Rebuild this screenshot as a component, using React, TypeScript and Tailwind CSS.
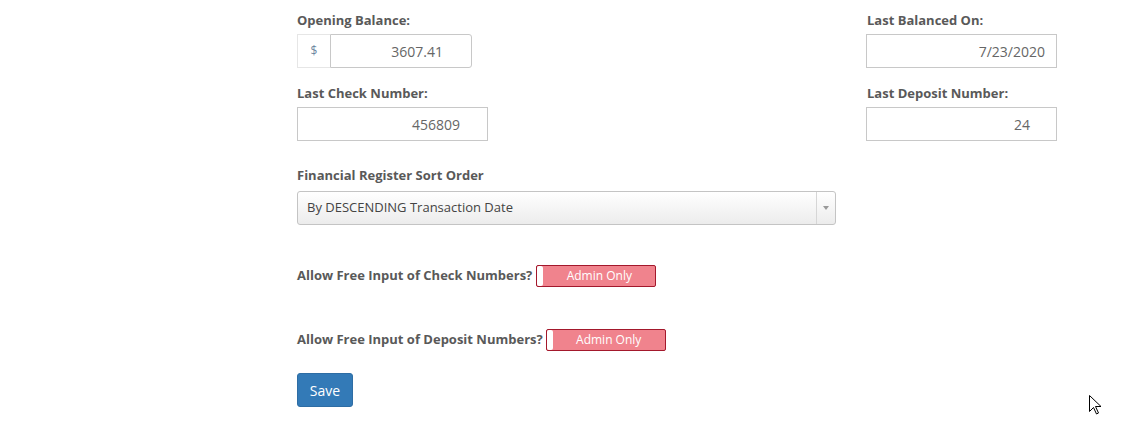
export default function App() {
  return (
    <div className="relative w-[1139px] h-[434px] bg-white font-['Open_Sans',sans-serif] text-[#666]">
      <div className="pl-[297px] pt-[11px] w-[1057px]">
        {/* top row */}
        <div className="flex justify-between">
          <div>
            <div className="text-[13px] leading-[18px] font-bold text-[#595959] mb-[5px]">Opening Balance:</div>
            <div className="flex h-[34px] w-[175px]">
              <span className="w-[33px] border border-[#e6e6e6] border-r-0 flex items-center justify-center text-[12px] text-[#6d86a0]">$</span>
              <div className="flex-1 border border-[#c8c8c8] rounded-r-[3px] flex items-center justify-end pr-[28px] text-[14px]">3607.41</div>
            </div>
          </div>
          <div>
            <div className="text-[13px] leading-[18px] font-bold text-[#595959] mb-[5px] pl-[1px]">Last Balanced On:</div>
            <div className="h-[34px] w-[191px] border border-[#c8c8c8] flex items-center justify-end pr-[11px] text-[14px]">7/23/2020</div>
          </div>
        </div>

        {/* second row */}
        <div className="flex justify-between mt-[16px]">
          <div>
            <div className="text-[13px] leading-[18px] font-bold text-[#595959] mb-[5px]">Last Check Number:</div>
            <div className="h-[34px] w-[191px] border border-[#c8c8c8] flex items-center justify-end pr-[27px] text-[14px]">456809</div>
          </div>
          <div>
            <div className="text-[13px] leading-[18px] font-bold text-[#595959] mb-[5px] pl-[1px]">Last Deposit Number:</div>
            <div className="h-[34px] w-[191px] border border-[#c8c8c8] flex items-center justify-end pr-[26px] text-[14px]">24</div>
          </div>
        </div>

        {/* sort order */}
        <div className="mt-[25px]">
          <div className="text-[13px] leading-[18px] font-bold text-[#595959] mb-[7px]">Financial Register Sort Order</div>
          <div className="h-[34px] w-[539px] border border-[#c4c4c4] rounded-[3px] flex bg-gradient-to-b from-white to-[#ececec]">
            <div className="flex-1 flex items-center pl-[9px] text-[13px] text-[#444]">By DESCENDING Transaction Date</div>
            <div className="w-[19px] border-l border-[#d6d6d6] flex items-center justify-center">
              <svg width="6" height="4" viewBox="0 0 6 4">
                <path d="M0 0H6L3 4Z" fill="#999" />
              </svg>
            </div>
          </div>
        </div>

        {/* toggles */}
        <div className="mt-[40px] flex items-center h-[22px]">
          <span className="text-[13px] font-bold text-[#595959] mr-[4px]">Allow Free Input of Check Numbers?</span>
          <div className="h-[22px] w-[120px] border border-[#a3182c] rounded-[2px] flex bg-[#f0838d]">
            <span className="w-[6px] bg-white rounded-[2px]"></span>
            <span className="flex-1 flex items-center justify-center text-[12px] text-white">Admin Only</span>
          </div>
        </div>
        <div className="mt-[42px] flex items-center h-[22px]">
          <span className="text-[13px] font-bold text-[#595959] mr-[3px]">Allow Free Input of Deposit Numbers?</span>
          <div className="h-[22px] w-[120px] border border-[#a3182c] rounded-[2px] flex bg-[#f0838d]">
            <span className="w-[6px] bg-white rounded-[2px]"></span>
            <span className="flex-1 flex items-center justify-center text-[12px] text-white">Admin Only</span>
          </div>
        </div>

        <button className="mt-[22px] h-[34px] w-[56px] bg-[#337ab7] border border-[#2e6da4] rounded-[3px] text-white text-[14px]">Save</button>
      </div>

      {/* mouse pointer */}
      <svg className="absolute left-[1089px] top-[395px]" width="13" height="20" viewBox="0 0 13 20">
        <path d="M0.5 0.5V16.5L4.5 12.5L7.5 19L9.5 18L6.5 11.5H12L0.5 0.5Z" fill="white" stroke="black" strokeWidth="1" />
      </svg>
    </div>
  );
}
